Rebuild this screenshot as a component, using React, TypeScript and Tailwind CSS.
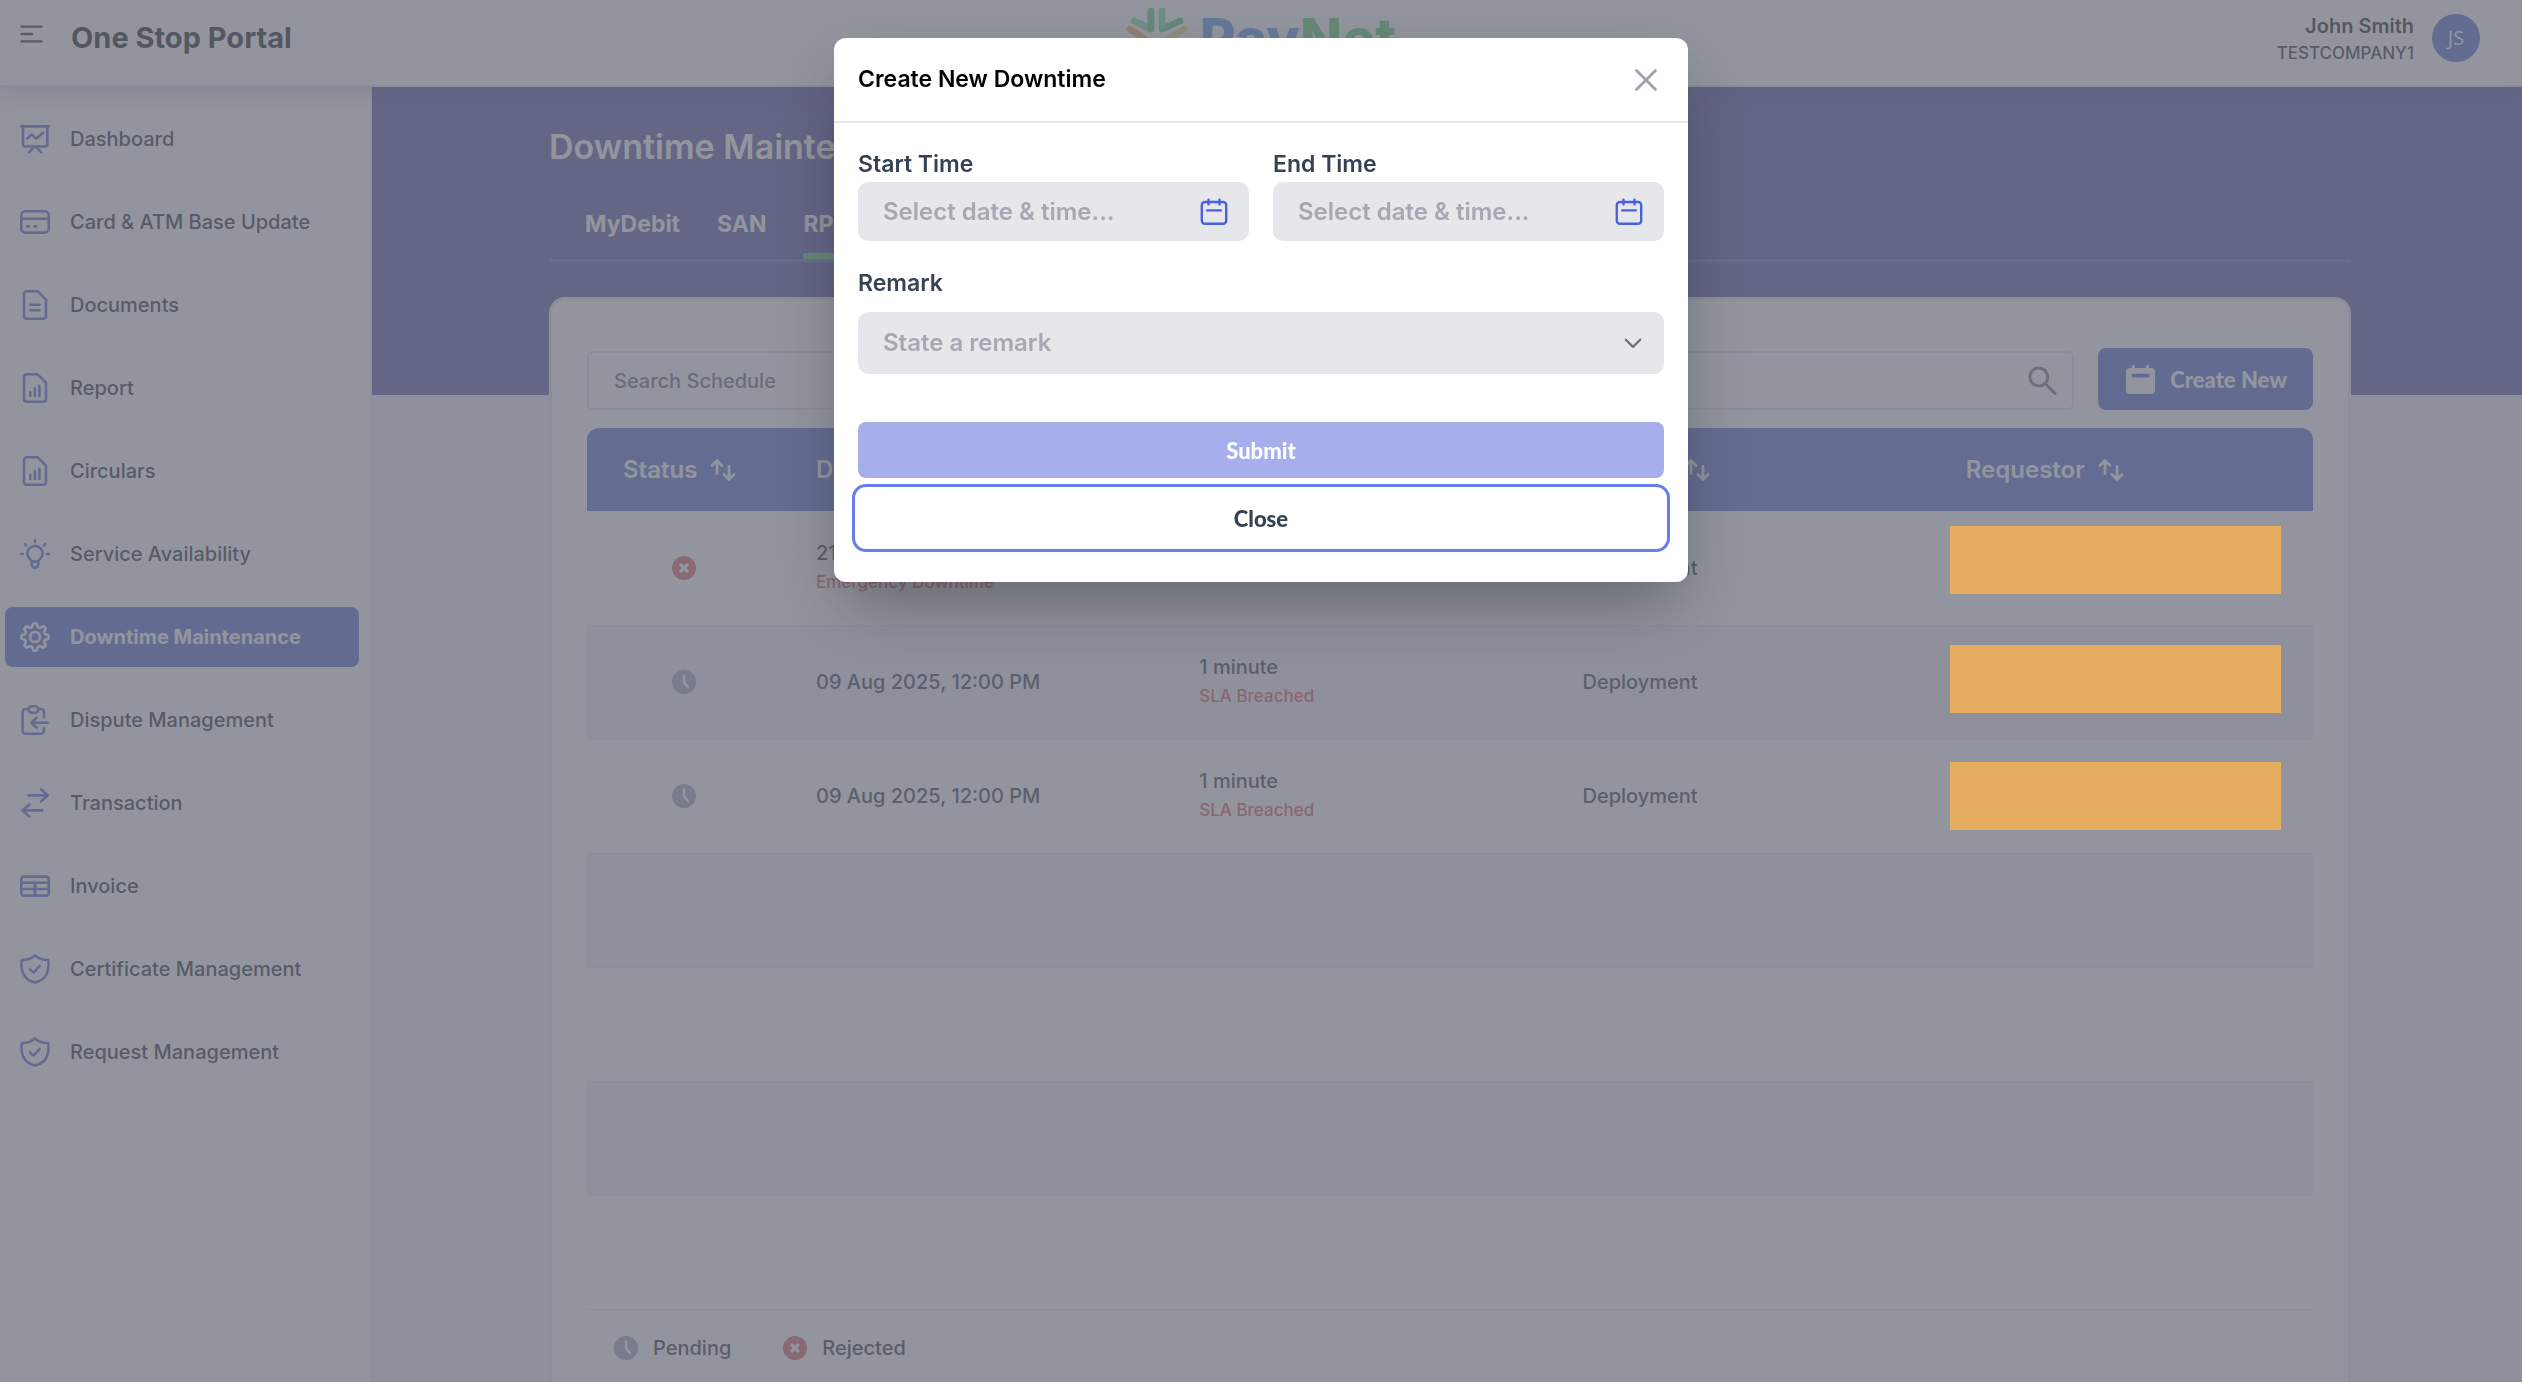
import { useState } from "react";
import type { ReactNode } from "react";

type NavItem = { label: string; icon: ReactNode; active?: boolean };

type Downtime = {
  status: "pending" | "rejected";
  date: string;
  dateNote?: string;
  duration: string;
  durationNote?: string;
  remark: string;
  // vertical place of the redaction block inside the row
  maskTop: string;
};

// Eight-lobed cog outline, drawn as a closed polyline
const COG = Array.from({ length: 128 }, (_, i) => {
  const a = (i / 128) * Math.PI * 2;
  const r = 12 + 1.8 * Math.tanh(2 * Math.cos(8 * a));
  return `${(15 + r * Math.cos(a)).toFixed(2)},${(15 + r * Math.sin(a)).toFixed(2)}`;
}).join(" ");

const FILE_OUTLINE = "M6.5 1.3H17.6L26 9.6V26A2.7 2.7 0 0 1 23.3 28.7H6.7A2.7 2.7 0 0 1 4 26V4A2.7 2.7 0 0 1 6.7 1.3Z";

const icons = {
  board: (
    <>
      <path d="M1.3 2.4H28.7M3 2.4V20.3A2.2 2.2 0 0 0 5.2 22.5H25.1A2.2 2.2 0 0 0 27.3 20.3V2.4" />
      <path d="M7.3 14.7L11.7 10.3L16 14.7L23 8.7M13 24.2L9 28.4M17 24.2L21.2 28.4" />
    </>
  ),
  card: (
    <>
      <rect x="1.3" y="4.2" width="27.4" height="21.4" rx="4" />
      <path d="M1.3 11.8H28.7M7.2 19.4H9M14.4 19.4H16.2" />
    </>
  ),
  document: <path d={`${FILE_OUTLINE}M10.5 14.7H19.5M10.5 20.3H19.5`} />,
  report: <path d={`${FILE_OUTLINE}M10.3 23V19M14.9 23V15.4M19.4 23V12.9`} />,
  bulb: (
    <>
      <path d="M11.8 22.6C11.8 20.6 7.3 19.5 7.3 14.6A7.6 7.6 0 0 1 22.7 14.6C22.7 19.5 18.2 20.6 18.2 22.6Z" />
      <path d="M11.8 22.6V25.6A3.2 3.2 0 0 0 18.2 25.6V22.6M15 1.2V3M1.2 15H3M27 15H28.8M5 5.2L6 6.4M25 5.2L24 6.4" />
    </>
  ),
  cog: (
    <>
      <polygon points={COG} />
      <circle cx="15" cy="15" r="5" />
    </>
  ),
  clipboard: (
    <>
      <path d="M8.4 4H5.6A3 3 0 0 0 2.6 7V25.7A3 3 0 0 0 5.6 28.7H21A3 3 0 0 0 24 25.7V23.4M24 12.2V7A3 3 0 0 0 21 4H18.4" />
      <rect x="8.6" y="1.3" width="9.6" height="6.4" rx="3.2" />
      <path d="M27.6 17.8H11.6M16.6 12.8L11.4 17.8L16.6 22.8" />
    </>
  ),
  transfer: (
    <path d="M8.6 7.4H27.6M21 1.4L27.8 7.4L21 13.4M22.2 22.4H2.4M9.4 16.4L2.4 22.4L9.4 28.6" />
  ),
  table: (
    <>
      <rect x="1.3" y="5.6" width="27.4" height="19" rx="2.6" />
      <path d="M1.3 11.8H28.7M1.3 18H28.7" />
      <path d="M15 12V24.5" strokeWidth="3" />
    </>
  ),
  shield: (
    <>
      <path d="M15 1.4C11.2 4.7 7 6 1.9 6C.6 13.5 1.6 25.4 15 28.6C28.4 25.4 29.4 13.5 28.1 6C23 6 18.8 4.7 15 1.4Z" />
      <path d="M10 15.5L13.6 18.6L19.6 12.2" />
    </>
  ),
};

const NAV: NavItem[] = [
  { label: "Dashboard", icon: icons.board },
  { label: "Card & ATM Base Update", icon: icons.card },
  { label: "Documents", icon: icons.document },
  { label: "Report", icon: icons.report },
  { label: "Circulars", icon: icons.report },
  { label: "Service Availability", icon: icons.bulb },
  { label: "Downtime Maintenance", icon: icons.cog, active: true },
  { label: "Dispute Management", icon: icons.clipboard },
  { label: "Transaction", icon: icons.transfer },
  { label: "Invoice", icon: icons.table },
  { label: "Certificate Management", icon: icons.shield },
  { label: "Request Management", icon: icons.shield },
];

const TABS = ["MyDebit", "SAN", "RPP"];

const COLUMNS = ["Status", "Date & Time", "Duration", "Remark", "Requestor"];

const ROWS: Downtime[] = [
  {
    status: "rejected",
    date: "21 Aug 2025, 12:00 PM",
    dateNote: "Emergency Downtime",
    duration: "1 minute",
    remark: "Deployment",
    maskTop: "top-[15px]",
  },
  {
    status: "pending",
    date: "09 Aug 2025, 12:00 PM",
    duration: "1 minute",
    durationNote: "SLA Breached",
    remark: "Deployment",
    maskTop: "top-[19px]",
  },
  {
    status: "pending",
    date: "09 Aug 2025, 12:00 PM",
    duration: "1 minute",
    durationNote: "SLA Breached",
    remark: "Deployment",
    maskTop: "top-[22px]",
  },
];

const EMPTY_ROWS = [0, 1, 2, 3];

function StatusIcon({ status }: { status: Downtime["status"] }) {
  return status === "pending" ? (
    <svg viewBox="0 0 24 24" className="w-6 h-6 shrink-0" role="img" aria-label="Pending">
      <circle cx="12" cy="12" r="12" fill="#9c9cb4" />
      <path d="M12 5.5V11.5C12 13 13.5 14 16 17" fill="none" stroke="#fff" strokeWidth="2.6" strokeLinecap="round" />
    </svg>
  ) : (
    <svg viewBox="0 0 24 24" className="w-6 h-6 shrink-0" role="img" aria-label="Rejected">
      <circle cx="12" cy="12" r="12" fill="#d6505c" />
      <path d="M9 9L15 15M15 9L9 15" fill="none" stroke="#fff" strokeWidth="3.4" strokeLinecap="round" />
    </svg>
  );
}

function SortIcon() {
  return (
    <svg viewBox="0 0 26 22" className="w-[26px] h-[22px]" fill="none" stroke="currentColor" strokeWidth="2.8" strokeLinecap="round" strokeLinejoin="round">
      <path d="M7 14.5V2M2 6.5L7 1.6L12 6.5" />
      <path d="M19 7.5V20M14 15.5L19 20.4L24 15.5" />
    </svg>
  );
}

function CalendarIcon() {
  return (
    <svg viewBox="0 0 28 28" className="w-7 h-7 shrink-0 text-[#4b5fe0]" fill="none" stroke="currentColor" strokeWidth="2.4" strokeLinecap="round">
      <rect x="1.8" y="4" width="24.4" height="21.8" rx="3" />
      <path d="M8.5 1.6V6.4M19.5 1.6V6.4M7.2 12.4H20.8" />
    </svg>
  );
}

function Logo() {
  return (
    <div className="flex items-center gap-3">
      <svg viewBox="0 0 62 62" className="w-[62px] h-[62px]" fill="none" strokeWidth="6.5" strokeLinecap="round" strokeLinejoin="round">
        <path d="M25 4V22L8 14" stroke="#74e098" />
        <path d="M25 4V22" stroke="#4cc46c" />
        <path d="M36 4V22L54 14" stroke="#4cc46c" />
        <path d="M36 4V18" stroke="#74e098" />
        <path d="M4 22L19 32L4 42" stroke="#f8a458" />
        <path d="M58 22L43 32L58 42" stroke="#f4d870" />
        <path d="M25 60V42L8 52M36 60V42L54 52" stroke="#4890f0" />
      </svg>
      <span className="text-[55px] leading-[60px] font-extrabold text-[#4890f0]">
        Pay<span className="text-[#54cc64]">Net</span>
      </span>
    </div>
  );
}

function Header() {
  return (
    <header className="relative h-[87px] shrink-0 grid grid-cols-3 items-center pb-[9px] bg-white border-b-2 border-[#e4e0f0] shadow-[0_6px_24px_rgba(30,20,90,0.25)]">
      <div className="flex items-center gap-7 pl-5">
        <button type="button" aria-label="Toggle menu" className="pb-2">
          <svg viewBox="0 0 23 18" className="w-[23px] h-[18px]" fill="none" stroke="#1c1c24" strokeWidth="2.4" strokeLinecap="round">
            <path d="M1.5 1.6H21.5M1.5 9H12M1.5 16.4H21.5" />
          </svg>
        </button>
        <h1 className="text-[29px] leading-9 font-bold text-[#08080c]">One Stop Portal</h1>
      </div>
      <div className="justify-self-center">
        <Logo />
      </div>
      <div className="flex items-center justify-end gap-[18px] pr-[42px]">
        <div className="pt-1 text-right">
          <p className="text-xl leading-[27px] font-semibold text-[#08080c]">John Smith</p>
          <p className="text-[17px] leading-[27px] font-medium text-[#181824]">TESTCOMPANY1</p>
        </div>
        <div className="w-12 h-12 rounded-full bg-[#4858d0] text-white text-xl flex items-center justify-center font-['Open_Sans',sans-serif]">
          JS
        </div>
      </div>
    </header>
  );
}

function Sidebar() {
  return (
    <nav className="w-[372px] shrink-0 bg-white border-r border-[#e8e4f4] pt-[22px] pl-[5px] pr-3">
      <ul className="flex flex-col gap-[23px]">
        {NAV.map((item) => (
          <li key={item.label}>
            <a
              href="#"
              className={`h-[60px] flex items-center gap-5 pl-[15px] rounded-lg text-xl ${
                item.active ? "bg-[#4858d0] text-white font-bold" : "text-[#14142a] font-medium"
              }`}
            >
              <svg
                viewBox="0 0 30 30"
                className={`w-[30px] h-[30px] ${item.active ? "text-white" : "text-[#4858d0]"}`}
                fill="none"
                stroke="currentColor"
                strokeWidth="2.6"
                strokeLinecap="round"
                strokeLinejoin="round"
              >
                {item.icon}
              </svg>
              {item.label}
            </a>
          </li>
        ))}
      </ul>
    </nav>
  );
}

function ScheduleTable() {
  return (
    <div className="rounded-t-xl overflow-hidden">
      <table className="w-full table-fixed text-xl font-medium text-[#24283c]">
        <thead>
          <tr className="h-[83px] bg-[#4c5cd0] text-white">
            {COLUMNS.map((col, i) => (
              <th key={col} className={`px-9 text-left text-2xl font-semibold ${i === 0 ? "w-[193px]" : ""}`}>
                <span className="flex items-center gap-[13px] whitespace-nowrap">
                  {col}
                  <SortIcon />
                </span>
              </th>
            ))}
          </tr>
        </thead>
        <tbody>
          {ROWS.map((row, i) => (
            <tr key={i} className="h-[114px] border-b border-[#e4e0f0] even:bg-[#f0ecf8]">
              <td>
                <div className="flex justify-center">
                  <StatusIcon status={row.status} />
                </div>
              </td>
              <td className="px-9">
                {row.date}
                {row.dateNote && <p className="text-[17px] leading-[30px] text-[#e0404c]">{row.dateNote}</p>}
              </td>
              <td className="px-9">
                {row.duration}
                {row.durationNote && <p className="text-[17px] leading-[30px] text-[#e0404c]">{row.durationNote}</p>}
              </td>
              <td className="px-9">{row.remark}</td>
              <td className="relative">
                {/* Redacted requestor */}
                <div className={`absolute z-20 left-[20px] right-[32px] h-[68px] bg-[#e4ad5f] ${row.maskTop}`} />
              </td>
            </tr>
          ))}
          {EMPTY_ROWS.map((n) => (
            <tr key={n} className="h-[114px] border-b border-[#e4e0f0] even:bg-[#f0ecf8]">
              <td colSpan={5} />
            </tr>
          ))}
        </tbody>
      </table>
      <div className="flex items-center gap-[52px] pl-[27px] pt-6 pb-20 text-xl font-medium text-[#1c1c30]">
        <span className="flex items-center gap-[15px]">
          <StatusIcon status="pending" />
          Pending
        </span>
        <span className="flex items-center gap-[15px]">
          <StatusIcon status="rejected" />
          Rejected
        </span>
      </div>
    </div>
  );
}

function DowntimePage() {
  return (
    <main className="flex-1 min-w-0 bg-[#f0ecf8]">
      <div className="h-[308px] bg-[#44449c] pl-[177px] pr-[171px] pt-[39px] text-white">
        <h2 className="text-[34px] leading-[42px] font-semibold">Downtime Maintenance</h2>
        <div className="mt-9 h-[58px] flex gap-[37px] pl-9 border-b-[3px] border-[#6060bc]">
          {TABS.map((tab) => (
            <button
              key={tab}
              type="button"
              className={`flex flex-col justify-between text-[23px] leading-10 font-bold ${tab === "RPP" ? "" : "pb-2"}`}
            >
              {tab}
              {tab === "RPP" && <span className="w-full h-[6px] rounded-full bg-[#54cc64]" />}
            </button>
          ))}
        </div>
      </div>
      <div className="-mt-[98px] ml-[177px] mr-[171px] px-[35px] pt-12 bg-white border-[3px] border-[#e8e4f0] rounded-2xl">
        <div className="flex items-end gap-6 mb-[18px]">
          <label className="flex-1 h-[59px] flex items-center pl-[25px] pr-[15px] border-2 border-[#e0dcf0] rounded-md">
            <input type="text" aria-label="Search schedule" placeholder="Search Schedule" className="flex-1 text-xl font-medium outline-none placeholder:text-[#5c5c78]" />
            <svg viewBox="0 0 29 29" className="w-[29px] h-[29px]" fill="none" stroke="#6c6c7c" strokeWidth="3" strokeLinecap="round">
              <circle cx="10.8" cy="11" r="9" />
              <path d="M17.5 17.8L27 27.4" />
            </svg>
          </label>
          <button type="button" className="h-[62px] pl-7 pr-[26px] flex items-center gap-[15px] rounded-lg bg-[#4858d0] text-white text-[22px] font-black font-['Lato',sans-serif]">
            <svg viewBox="0 0 29 29" className="w-[29px] h-[29px]" fill="currentColor">
              <path fillRule="evenodd" d="M5.8 1.5a1.5 1.5 0 0 1 3 0V3H20V1.5a1.5 1.5 0 0 1 3 0V3H25a4 4 0 0 1 4 4V25a4 4 0 0 1-4 4H4a4 4 0 0 1-4-4V7A4 4 0 0 1 4 3H5.8ZM7.3 8.8a1.8 1.8 0 0 0 0 3.6H21.7a1.8 1.8 0 0 0 0-3.6Z" />
            </svg>
            Create New
          </button>
        </div>
        <ScheduleTable />
      </div>
    </main>
  );
}

function DateField({ id, label }: { id: string; label: string }) {
  return (
    <div className="flex-1 min-w-0">
      <label htmlFor={id} className="block text-[23px] leading-[35px] font-semibold text-gray-700">
        {label}
      </label>
      <div className="h-[59px] flex items-center pl-[25px] pr-[21px] rounded-[10px] bg-gray-200">
        <input
          id={id}
          type="text"
          placeholder="Select date & time..."
          className="flex-1 min-w-0 text-2xl font-semibold text-gray-700 outline-none placeholder:text-[#a4a9b3]"
        />
        <CalendarIcon />
      </div>
    </div>
  );
}

function CreateDowntimeDialog({ onClose }: { onClose: () => void }) {
  return (
    <div role="dialog" aria-modal="true" aria-labelledby="dialog-title" className="w-[854px] bg-white rounded-xl shadow-[0_30px_60px_-12px_rgba(30,30,40,0.4)]">
      <div className="h-[85px] flex items-center justify-between px-6 border-b-2 border-gray-200">
        <h3 id="dialog-title" className="text-[23px] font-semibold text-black">Create New Downtime</h3>
        <button type="button" aria-label="Close dialog" onClick={onClose} className="pr-1">
          <svg viewBox="0 0 28 28" className="w-7 h-7" fill="none" stroke="#9ca3af" strokeWidth="2.8" strokeLinecap="round">
            <path d="M4.5 4.5L23.5 23.5M23.5 4.5L4.5 23.5" />
          </svg>
        </button>
      </div>
      <form className="px-6 pt-6 pb-9" onSubmit={(e) => e.preventDefault()}>
        <div className="flex gap-6">
          <DateField id="start-time" label="Start Time" />
          <DateField id="end-time" label="End Time" />
        </div>
        <label htmlFor="remark" className="block mt-[25px] mb-[11px] text-[23px] leading-[35px] font-semibold text-gray-700">
          Remark
        </label>
        <div className="relative">
          <select id="remark" defaultValue="" className="w-full h-[62px] pl-[25px] pr-12 appearance-none rounded-[10px] bg-gray-200 text-2xl font-semibold text-[#a4a9b3] outline-none">
            <option value="">State a remark</option>
            <option value="deployment">Deployment</option>
          </select>
          <svg viewBox="0 0 20 12" className="absolute right-[22px] top-[26px] w-[18px] h-[11px] pointer-events-none" fill="none" stroke="#6b7280" strokeWidth="2.6" strokeLinecap="round" strokeLinejoin="round">
            <path d="M2 1.8L10 9.8L18 1.8" />
          </svg>
        </div>
        <div className="mt-12 flex flex-col gap-3 font-['Lato',sans-serif]">
          <button type="submit" className="h-14 rounded-lg bg-[#a6aeec] text-white text-[22px] font-black">
            Submit
          </button>
          <button type="button" onClick={onClose} className="h-14 rounded-lg text-gray-700 text-[22px] font-black outline-3 outline-offset-3 outline-[#667eea]">
            Close
          </button>
        </div>
      </form>
    </div>
  );
}

export default function App() {
  const [open, setOpen] = useState(true);

  return (
    <div className="h-screen overflow-hidden flex flex-col font-['Inter',sans-serif]">
      <Header />
      <div className="flex-1 flex">
        <Sidebar />
        <DowntimePage />
      </div>
      {open && (
        <>
          <div className="fixed inset-0 z-10 bg-[#6d717c]/75" />
          <div className="fixed inset-0 z-30 flex justify-center items-start pt-[38px]">
            <CreateDowntimeDialog onClose={() => setOpen(false)} />
          </div>
        </>
      )}
    </div>
  );
}
